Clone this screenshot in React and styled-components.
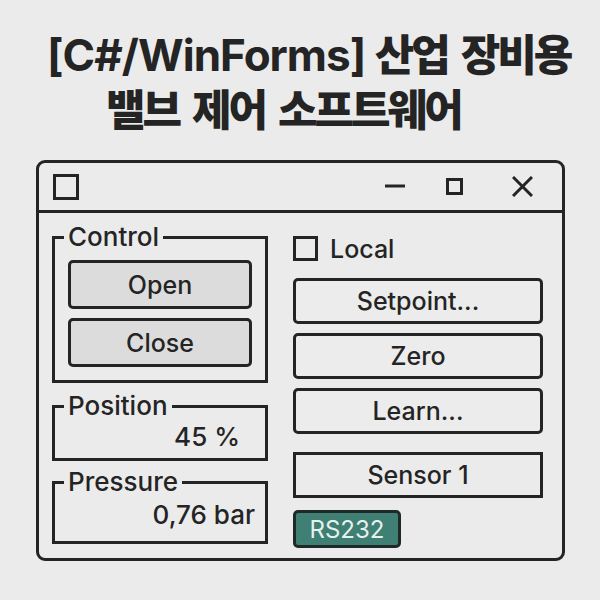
import React from 'react'
import { styled, createGlobalStyle } from 'styled-components'

const ink = '#242424'

const GlobalStyle = createGlobalStyle`
  * { box-sizing: border-box; }
  body {
    margin: 0;
    background: #ebebeb;
    color: ${ink};
    font-family: Inter, "Liberation Sans", "Noto Sans CJK KR", sans-serif;
  }
`

const Page = styled.div`
  width: 600px;
  height: 600px;
  padding-top: 28px;
`

const Heading = styled.h1`
  margin: 0 0 22px;
  font-size: 44px;
  font-weight: 700;
  line-height: 55px;
  letter-spacing: -1px;
`

const HeadLine = styled.span`
  display: block;
  height: 55px;
  padding-left: ${p => p.$indent}px;
  white-space: nowrap;
`

const Hangul = styled.span`
  font-family: "Noto Sans CJK KR", sans-serif;
  font-size: 43px;
  font-weight: 900;
  line-height: 1;
  letter-spacing: -3px;
  word-spacing: 6px;
`

const Window = styled.div`
  margin-left: 36px;
  width: 529px;
  height: 401px;
  border: 3px solid ${ink};
  border-radius: 9px;
  display: flex;
  flex-direction: column;
`

const TitleBar = styled.div`
  display: flex;
  align-items: center;
  height: 50px;
  padding: 0 29px 0 14px;
  border-bottom: 3px solid ${ink};
`

const AppIcon = styled.span`
  width: 26px;
  height: 26px;
  border: 3px solid ${ink};
`

const Caption = styled.div`
  margin-left: auto;
  display: flex;
  align-items: center;
`

const CaptionIcon = styled.svg`
  display: block;
  margin-left: ${p => p.$gap || 0}px;
  stroke: ${ink};
  stroke-width: 3;
  fill: none;
`

const Body = styled.div`
  display: grid;
  grid-template-columns: 216px 250px;
  column-gap: 25px;
  padding: 11px 0 0 13px;
  font-weight: 500;
`

const Column = styled.div`
  display: flex;
  flex-direction: column;
`

const Group = styled.fieldset`
  margin: ${p => p.$top || 0}px 0 0;
  min-width: 0;
  border: 3px solid ${ink};
  padding: ${p => p.$pad};
  display: flex;
  flex-direction: column;
  gap: 9px;
`

const Legend = styled.legend`
  margin-left: -4px;
  padding: 0 4px;
  font-size: 26px;
  line-height: 26px;
`

const Readout = styled.div`
  height: 30px;
  line-height: 30px;
  font-size: 26px;
  text-align: right;
  padding-right: ${p => p.$inset}px;
`

const PushButton = styled.button`
  height: ${p => p.$height}px;
  margin-top: ${p => p.$top || 0}px;
  border: 3px solid ${ink};
  border-radius: 5px;
  background: ${p => (p.$raised ? '#dcdcdc' : '#ececec')};
  color: ${ink};
  font-family: inherit;
  font-weight: inherit;
  font-size: 25px;
  padding: 0;
`

const CheckRow = styled.label`
  display: flex;
  align-items: center;
  margin-top: 12px;
  height: 25px;
  font-size: 25px;
`

const CheckBox = styled.span`
  width: 25px;
  height: 25px;
  border: 3px solid ${ink};
  margin-right: 12px;
`

const SensorBox = styled.div`
  margin-top: 18px;
  height: 46px;
  border: 3px solid ${ink};
  display: flex;
  align-items: center;
  justify-content: center;
  font-size: 25px;
`

const PortBadge = styled.div`
  margin-top: 12px;
  width: 108px;
  height: 38px;
  border: 3px solid #1f2a28;
  border-radius: 5px;
  background: #3f7f74;
  color: #e4f2ee;
  display: flex;
  align-items: center;
  justify-content: center;
  font-size: 24px;
  font-weight: 400;
`

export default function App() {
  return (
    <>
      <GlobalStyle />
      <Page>
        <Heading>
          <HeadLine $indent={47}>
            [C#/WinForms] <Hangul>산업 장비용</Hangul>
          </HeadLine>
          <HeadLine $indent={106}>
            <Hangul>밸브 제어 소프트웨어</Hangul>
          </HeadLine>
        </Heading>

        <Window>
          <TitleBar>
            <AppIcon />
            <Caption>
              <CaptionIcon width="20" height="20" viewBox="0 0 20 20">
                <path d="M0 9h20" />
              </CaptionIcon>
              <CaptionIcon $gap={41} width="17" height="17" viewBox="0 0 17 17">
                <rect x="1.5" y="1.5" width="14" height="14" />
              </CaptionIcon>
              <CaptionIcon $gap={49} width="21" height="21" viewBox="0 0 21 21">
                <path d="M1 1l19 19M20 1L1 20" />
              </CaptionIcon>
            </Caption>
          </TitleBar>

          <Body>
            <Column>
              <Group $pad="10px 13px 13px">
                <Legend>Control</Legend>
                <PushButton $raised $height={49}>Open</PushButton>
                <PushButton $raised $height={49}>Close</PushButton>
              </Group>
              <Group $top={10} $pad="3px 13px 6px">
                <Legend>Position</Legend>
                <Readout $inset={12}>45 %</Readout>
              </Group>
              <Group $top={8} $pad="5px 10px 11px 13px">
                <Legend>Pressure</Legend>
                <Readout $inset={0}>0,76 bar</Readout>
              </Group>
            </Column>

            <Column>
              <CheckRow>
                <CheckBox />
                Local
              </CheckRow>
              <PushButton $height={46} $top={17}>Setpoint...</PushButton>
              <PushButton $height={46} $top={9}>Zero</PushButton>
              <PushButton $height={46} $top={9}>Learn...</PushButton>
              <SensorBox>Sensor 1</SensorBox>
              <PortBadge>RS232</PortBadge>
            </Column>
          </Body>
        </Window>
      </Page>
    </>
  )
}
